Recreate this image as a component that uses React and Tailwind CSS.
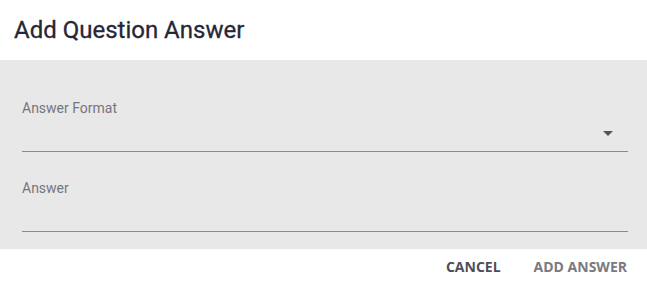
import React from "react";

export default function App() {
  return (
    <div className="w-[647px] h-[284px] bg-white flex flex-col" style={{ fontFamily: "Roboto, 'Liberation Sans', sans-serif" }}>
      <div className="h-[60px] flex items-center px-[14px]">
        <h2 className="text-[24px] text-[#272636] leading-none [-webkit-text-stroke:0.3px_#272636]">Add Question Answer</h2>
      </div>

      <div className="bg-[#e8e8e8] h-[189px] px-[22px] pr-[19px] pt-[40px]">
        <div className="h-[52px] flex flex-col border-b border-[#8a8994]">
          <label className="text-[14px] text-[#76757f] leading-4">Answer Format</label>
          <div className="flex-1 flex items-center justify-end pr-[15px]">
            <svg width="10" height="5" viewBox="0 0 10 5">
              <path d="M0 0L10 0L5 5Z" fill="#555" />
            </svg>
          </div>
        </div>

        <div className="mt-[28px] h-[52px] flex flex-col border-b border-[#8a8994]">
          <label className="text-[14px] text-[#76757f] leading-4">Answer</label>
        </div>
      </div>

      <div className="flex-1 flex items-center justify-end pr-[20px] gap-[33px]" style={{ fontFamily: "'Open Sans', sans-serif" }}>
        <button className="text-[14px] font-bold text-[#4f4e58]">CANCEL</button>
        <button className="text-[14px] font-bold text-[#7a7982]">ADD ANSWER</button>
      </div>
    </div>
  );
}
